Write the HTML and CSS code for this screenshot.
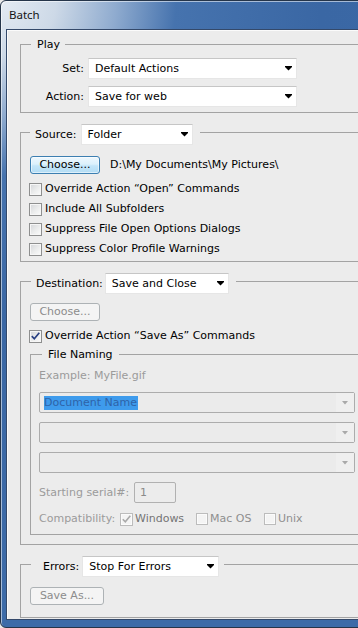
FILE: index.html
```html
<!DOCTYPE html>
<html>
<head>
<meta charset="utf-8">
<title>Batch</title>
<link rel="stylesheet" href="styles.css">
</head>
<body>
<div class="window">
  <div class="titlebar"><span class="title">Batch</span></div>
  <div class="client">

    <fieldset class="group group-play">
      <legend class="legend-text legend-play">Play</legend>
      <div class="field-row">
        <span class="field-label">Set:</span>
        <div class="select select-play"><span class="select-value">Default Actions</span><svg class="arrow" width="7" height="5" viewBox="0 0 7 5"><path d="M0 0H7V1L3.5 4.5L0 1Z"/></svg></div>
      </div>
      <div class="field-row">
        <span class="field-label">Action:</span>
        <div class="select select-play"><span class="select-value">Save for web</span><svg class="arrow" width="7" height="5" viewBox="0 0 7 5"><path d="M0 0H7V1L3.5 4.5L0 1Z"/></svg></div>
      </div>
    </fieldset>

    <fieldset class="group group-source">
      <legend class="legend-control legend-source">
        <span class="legend-label">Source:</span>
        <span class="select select-source"><span class="select-value">Folder</span><svg class="arrow" width="7" height="5" viewBox="0 0 7 5"><path d="M0 0H7V1L3.5 4.5L0 1Z"/></svg></span>
      </legend>
      <div class="path-row">
        <button class="btn btn-focus" type="button">Choose...</button>
        <span class="path">D:\My Documents\My Pictures\</span>
      </div>
      <div class="check-row"><span class="checkbox"></span><span>Override Action “Open” Commands</span></div>
      <div class="check-row"><span class="checkbox"></span><span>Include All Subfolders</span></div>
      <div class="check-row"><span class="checkbox"></span><span>Suppress File Open Options Dialogs</span></div>
      <div class="check-row"><span class="checkbox"></span><span>Suppress Color Profile Warnings</span></div>
    </fieldset>

    <fieldset class="group group-dest">
      <legend class="legend-control legend-dest">
        <span class="legend-label">Destination:</span>
        <span class="select select-dest"><span class="select-value">Save and Close</span><svg class="arrow" width="7" height="5" viewBox="0 0 7 5"><path d="M0 0H7V1L3.5 4.5L0 1Z"/></svg></span>
      </legend>
      <div class="path-row">
        <button class="btn btn-disabled" type="button">Choose...</button>
      </div>
      <div class="check-row check-row-dest"><span class="checkbox checked"><svg width="11" height="11" viewBox="0 0 11 11"><path d="M1.8 5.2L4.3 7.8L9.3 1.8" fill="none" stroke="#283f82" stroke-width="1.7"/></svg></span><span>Override Action “Save As” Commands</span></div>

      <fieldset class="group group-naming">
        <legend class="legend-text legend-naming">File Naming</legend>
        <div class="example">Example: MyFile.gif</div>
        <div class="dd dd-first"><span class="dd-value"><span class="dd-highlight">Document Name</span></span><span class="dd-btn"><svg width="6" height="4" viewBox="0 0 6 4"><path d="M0 0H6L3 3.5Z"/></svg></span></div>
        <div class="dd"><span class="dd-value"></span><span class="dd-btn"><svg width="6" height="4" viewBox="0 0 6 4"><path d="M0 0H6L3 3.5Z"/></svg></span></div>
        <div class="dd"><span class="dd-value"></span><span class="dd-btn"><svg width="6" height="4" viewBox="0 0 6 4"><path d="M0 0H6L3 3.5Z"/></svg></span></div>
        <div class="serial-row">
          <span class="serial-label">Starting serial#:</span>
          <span class="serial-input">1</span>
        </div>
        <div class="compat-row">
          <span class="compat-label">Compatibility:</span>
          <span class="compat-opt opt-win"><span class="checkbox disabled"><svg width="11" height="11" viewBox="0 0 11 11"><path d="M1.8 5.2L4.3 7.8L9.3 1.8" fill="none" stroke="#a9a9a9" stroke-width="1.6"/></svg></span><span class="opt-text-win">Windows</span></span>
          <span class="compat-opt opt-mac"><span class="checkbox disabled small"></span><span>Mac OS</span></span>
          <span class="compat-opt opt-unix"><span class="checkbox disabled small"></span><span>Unix</span></span>
        </div>
      </fieldset>
    </fieldset>

    <fieldset class="group group-errors">
      <legend class="legend-control legend-errors">
        <span class="legend-label">Errors:</span>
        <span class="select select-errors"><span class="select-value">Stop For Errors</span><svg class="arrow" width="7" height="5" viewBox="0 0 7 5"><path d="M0 0H7V1L3.5 4.5L0 1Z"/></svg></span>
      </legend>
      <div class="path-row">
        <button class="btn btn-disabled btn-saveas" type="button">Save As...</button>
      </div>
    </fieldset>

  </div>
</div>
</body>
</html>
```

FILE: styles.css
```css
* { box-sizing: border-box; }

html, body {
  margin: 0;
  padding: 0;
  width: 358px;
  height: 628px;
  overflow: hidden;
}

body {
  background: #e9e9e9;
  font-family: "DejaVu Sans", sans-serif;
  font-size: 11px;
  line-height: 14px;
  color: #000;
}

.window {
  width: 400px;
  height: 628px;
  display: flex;
  flex-direction: column;
  border: 1px solid #25354a;
  border-radius: 6px 6px 6px 6px;
  padding: 0 0 7px 5px;
  background: radial-gradient(circle at 0 0, #e4ebf3 0px, #cdd9e7 55px, #8fabcf 115px, #4673ae 175px, #3a67a4 320px, #3d6ba8 600px);
  box-shadow: inset 1px 1px 0 rgba(255, 255, 255, 0.55);
}

.titlebar {
  height: 28px;
  flex: none;
  display: flex;
  align-items: center;
  padding-left: 3px;
}

.title {
  font-family: "Noto Sans", sans-serif;
  font-size: 11.5px;
  color: #141414;
}

.client {
  flex: 1;
  background: #ececec;
  border: 1px solid #34496a;
  box-shadow: inset 1px 1px 0 #fbfbfb;
  padding-top: 6px;
  display: flex;
  flex-direction: column;
}

/* group boxes */
.group {
  margin: 0 13px 0 13px;
  padding: 0;
  border: 1px solid #a3a3a3;
  min-width: 0;
}

.group legend {
  margin: 0;
  padding: 0;
}

.legend-text {
  padding: 2px 5px 1px 6px !important;
  line-height: 14px;
}

.legend-play { margin-left: 1px !important; }

.legend-control {
  display: flex;
  align-items: center;
  padding: 4px 7px 0 5px !important;
}

.legend-label { margin-right: 4px; }

.legend-dest { margin-left: 1px !important; padding-right: 7px !important; }
.legend-dest .legend-label { margin-right: 2px; }

.legend-errors { margin-left: 1px !important; padding-left: 12px !important; padding-right: 5px !important; }
.legend-errors .legend-label { margin-right: 3px; }

.group-play {
  padding: 5px 0 5px 9px;
  display: flex;
  flex-direction: column;
  gap: 7px;
}

.group-source {
  margin-top: 7px;
  padding: 11px 0 2px 9px;
}

.group-dest {
  margin-top: 7px;
  padding: 9px 0 9px 9px;
}

.group-errors {
  margin-top: 7px;
  padding: 10px 0 7px 9px;
}

.group-naming {
  margin: 0;
  padding: 6px 0 5px 8px;
}

.legend-naming {
  margin-left: 3px !important;
  padding: 2px 6px 1px 6px !important;
}

/* Play rows */
.field-row {
  display: flex;
  align-items: center;
  gap: 4px;
}

.field-label {
  width: 54px;
  text-align: right;
}

/* selects */
.select {
  height: 21px;
  display: flex;
  align-items: center;
  justify-content: space-between;
  background: #fff;
  border: 1px solid #e6e6e6;
  border-top-color: #c6c6c6;
  padding: 0 4px 0 6px;
}

.select .arrow { fill: #000; flex: none; }

.select-play { width: 209px; }
.select-source { width: 112px; }
.select-dest { width: 124px; }
.select-errors { width: 137px; }

/* buttons */
.btn {
  font: inherit;
  height: 18px;
  width: 70px;
  padding: 0;
  border-radius: 3px;
  text-align: center;
  line-height: 14px;
}

.btn-focus {
  color: #000;
  border: 1px solid #3c7fb1;
  background: linear-gradient(#eef8fe 0%, #dcf1fc 45%, #c4e6f9 55%, #b2dcf4 100%);
  box-shadow: inset 0 0 0 1px rgba(255, 255, 255, 0.55);
}

.btn-disabled {
  color: #8c8c8c;
  border: 1px solid #adb2b5;
  background: #f4f4f4;
}

.btn-saveas { width: 74px; }

.path-row {
  display: flex;
  align-items: center;
  height: 18px;
  margin-bottom: 5px;
}

.path { margin-left: 10px; }

/* checkbox rows */
.check-row {
  display: flex;
  align-items: center;
  height: 20px;
}

.check-row-dest { margin-top: 0; }

.checkbox {
  flex: none;
  width: 13px;
  height: 13px;
  margin-left: -1px;
  margin-right: 3px;
  border: 1px solid #8e8f8f;
  background: linear-gradient(135deg, #d3d5d8 0%, #eceded 55%, #fbfbfb 100%);
  box-shadow: inset 0 0 0 1px #f6f6f6;
  display: flex;
  align-items: center;
  justify-content: center;
}

.checkbox.disabled {
  border-color: #bcbcbc;
  background: #f4f4f4;
  box-shadow: inset 0 0 0 1px #fbfbfb;
  margin-left: 0;
  margin-right: 2px;
}

.checkbox.small { width: 12px; height: 12px; }

/* file naming */
.example {
  color: #9b9b9b;
  height: 14px;
  margin-bottom: 9px;
}

.dd {
  width: 316px;
  height: 21px;
  display: flex;
  align-items: stretch;
  border: 1px solid #acacac;
  border-radius: 2px;
  background: #ebebeb;
  margin-bottom: 9px;
}

.dd-value {
  flex: 1;
  display: flex;
  align-items: center;
  padding-left: 4px;
}

.dd-highlight {
  background: #3e9bec;
  color: #2f63a8;
  padding: 0 1px 0 0;
  line-height: 14px;
}

.dd-btn {
  width: 18px;
  display: flex;
  align-items: center;
  justify-content: center;
  background: #efefef;
  fill: #a9a9a9;
}

.serial-row {
  display: flex;
  align-items: center;
  height: 21px;
}

.serial-label {
  width: 95px;
  color: #9b9b9b;
}

.serial-input {
  width: 42px;
  height: 21px;
  border: 1px solid #b1b1b1;
  border-radius: 2px;
  background: #ececec;
  color: #8a8a8a;
  padding-left: 5px;
  display: flex;
  align-items: center;
}

.compat-row {
  display: flex;
  align-items: center;
  height: 20px;
  margin-top: 6px;
}

.compat-label {
  width: 81px;
  color: #9b9b9b;
}

.compat-opt {
  display: flex;
  align-items: center;
  color: #8f8f8f;
}

.opt-win { width: 76px; }
.opt-mac { width: 68px; }
.opt-text-win { color: #747474; }
```
